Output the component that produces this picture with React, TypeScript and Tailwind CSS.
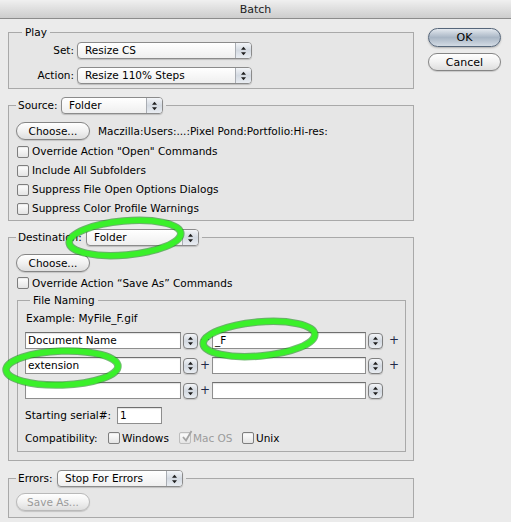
import type { ReactNode } from 'react';

function Arrows() {
  return (
    <svg width="7" height="10" viewBox="0 0 7 10">
      <path d="M3.5 0.8 L6 3.8 L1 3.8 Z" fill="#1e1e1e" />
      <path d="M1 6.2 L6 6.2 L3.5 9.2 Z" fill="#1e1e1e" />
    </svg>
  );
}

function Popup({ value, width }: { value: string; width: string }) {
  return (
    <div
      className={`flex h-[17px] items-center rounded-[4px] border border-[#8b8b8b] bg-linear-to-b from-white to-[#efefef] shadow-[0_1px_1px_rgba(0,0,0,0.18)] ${width}`}
    >
      <span className="flex-1 truncate pl-[7px] leading-[15px]">{value}</span>
      <span className="flex h-full w-[16px] items-center justify-center rounded-r-[3px] border-l border-[#a9adb3] bg-linear-to-b from-[#f3f5f8] via-[#d4dae2] to-[#e9edf2]">
        <Arrows />
      </span>
    </div>
  );
}

function Stepper() {
  return (
    <span className="ml-[2px] flex h-[16px] w-[15px] items-center justify-center rounded-[4px] border border-[#7f7f7f] bg-linear-to-b from-[#f3f5f8] via-[#d2d8e0] to-[#e9edf2] shadow-[0_1px_1px_rgba(0,0,0,0.15)]">
      <Arrows />
    </span>
  );
}

function PillButton({ children, width, disabled }: { children: ReactNode; width: string; disabled?: boolean }) {
  return (
    <div
      className={`flex h-[18px] items-center justify-center rounded-full border bg-linear-to-b from-white via-[#f1f1f1] to-[#dedede] shadow-[0_1px_1px_rgba(0,0,0,0.15)] ${width} ${
        disabled ? 'border-[#b9b9b9] text-[#9a9a9a]' : 'border-[#858585] text-black'
      }`}
    >
      {children}
    </div>
  );
}

function Checkbox({ checked, disabled }: { checked?: boolean; disabled?: boolean }) {
  return (
    <span
      className={`relative flex h-[12px] w-[12px] shrink-0 items-center justify-center rounded-[2px] border bg-linear-to-b from-white to-[#e4e4e4] shadow-[inset_0_1px_1px_rgba(0,0,0,0.08)] ${
        disabled ? 'border-[#bdbdbd]' : 'border-[#7e7e7e]'
      }`}
    >
      {checked && (
        <svg width="12" height="13" viewBox="0 0 12 13" className="absolute -top-[3px] left-[1px]">
          <path d="M2 7 L5 10.5 L10.5 1" stroke="#a4a4a4" strokeWidth="1.8" fill="none" />
        </svg>
      )}
    </span>
  );
}

function CheckRow({ label }: { label: string }) {
  return (
    <div className="flex h-[19px] items-center gap-[3px] pl-[1px]">
      <Checkbox />
      <span>{label}</span>
    </div>
  );
}

function Field({ value, width }: { value?: string; width: string }) {
  return (
    <div
      className={`h-[17px] border border-[#8e8e8e] border-t-[#6f6f6f] bg-white pl-[2px] leading-[15px] shadow-[inset_0_1px_1px_rgba(0,0,0,0.12)] ${width}`}
    >
      {value}
    </div>
  );
}

function NamingRow({ left, right, plus }: { left?: string; right?: string; plus: boolean }) {
  return (
    <div className="flex h-[17px] items-center">
      <Field value={left} width="w-[156px]" />
      <Stepper />
      <span className="w-[14px] text-center text-[12px] text-[#222a48]">+</span>
      <Field value={right} width="w-[154px]" />
      <Stepper />
      {plus && <span className="ml-[6px] text-[12px] text-[#222a48]">+</span>}
    </div>
  );
}

export default function App() {
  return (
    <div className="relative h-[522px] w-[511px] overflow-hidden bg-[#ebebeb] text-[10.5px] leading-[13px] text-black [font-family:'DejaVu_Sans',sans-serif]">
      <div className="flex h-[19px] items-center justify-center border-b border-[#8c8c8c] bg-linear-to-b from-[#f0f0f0] to-[#cdcdcd] text-[11px] text-[#222]">
        Batch
      </div>

      <div className="flex pl-[8px] pt-[6px]">
        <div className="flex w-[406px] flex-col">
          {/* Play */}
          <fieldset className="border border-[#a9a9a9] bg-black/[0.02] pb-[4px]">
            <legend className="ml-[13px] px-[3px] leading-[14px]">Play</legend>
            <div className="mt-[3px] flex h-[17px] items-center">
              <span className="w-[65px] text-right">Set:</span>
              <div className="ml-[3px]">
                <Popup value="Resize CS" width="w-[175px]" />
              </div>
            </div>
            <div className="mt-[8px] flex h-[17px] items-center">
              <span className="w-[65px] text-right">Action:</span>
              <div className="ml-[3px]">
                <Popup value="Resize 110% Steps" width="w-[175px]" />
              </div>
            </div>
          </fieldset>

          {/* Source */}
          <fieldset className="mt-[8px] border border-[#a9a9a9] bg-black/[0.02] pb-[2px] pl-[7px]">
            <legend className="flex items-center pl-[2px] pr-[3px]">
              <span className="w-[43px]">Source:</span>
              <Popup value="Folder" width="w-[102px]" />
            </legend>
            <div className="mt-[8px] flex items-center">
              <PillButton width="w-[74px]">Choose...</PillButton>
              <span className="ml-[8px]">Maczilla:Users:...:Pixel Pond:Portfolio:Hi-res:</span>
            </div>
            <div className="mt-[2px]">
              <CheckRow label={'Override Action "Open" Commands'} />
              <CheckRow label="Include All Subfolders" />
              <CheckRow label="Suppress File Open Options Dialogs" />
              <CheckRow label="Suppress Color Profile Warnings" />
            </div>
          </fieldset>

          {/* Destination */}
          <fieldset className="mt-[8px] border border-[#a9a9a9] bg-black/[0.02] pb-[8px] pl-[7px]">
            <legend className="flex items-center pl-[2px] pr-[3px]">
              <span className="w-[68px]">Destination:</span>
              <Popup value="Folder" width="w-[113px]" />
            </legend>
            <div className="mt-[8px]">
              <PillButton width="w-[74px]">Choose...</PillButton>
            </div>
            <div className="mt-[2px] flex h-[18px] items-center gap-[3px] pl-[1px]">
              <Checkbox />
              <span>Override Action “Save As” Commands</span>
            </div>

            <fieldset className="ml-[1px] mt-[1px] w-[389px] border border-[#a9a9a9] pb-[5px] pl-[7px]">
              <legend className="ml-[5px] px-[3px] leading-[14px]">File Naming</legend>
              <div className="mt-[4px] flex h-[14px] items-center pl-[1px]">Example: MyFile_F.gif</div>
              <div className="mt-[7px] flex flex-col gap-[8px]">
                <NamingRow left="Document Name" right="_F" plus />
                <NamingRow left="extension" plus />
                <NamingRow plus={false} />
              </div>
              <div className="mt-[8px] flex h-[17px] items-center">
                <span className="w-[92px]">Starting serial#:</span>
                <Field value="1" width="w-[45px]" />
              </div>
              <div className="mt-[6px] flex h-[16px] items-center">
                <span className="w-[83px]">Compatibility:</span>
                <div className="flex w-[71px] items-center gap-[2px]">
                  <Checkbox />
                  <span>Windows</span>
                </div>
                <div className="flex w-[63px] items-center gap-[2px]">
                  <Checkbox checked disabled />
                  <span className="text-[#9c9c9c]">Mac OS</span>
                </div>
                <div className="flex items-center gap-[2px]">
                  <Checkbox />
                  <span>Unix</span>
                </div>
              </div>
            </fieldset>
          </fieldset>

          {/* Errors */}
          <fieldset className="mt-[9px] border border-[#a9a9a9] bg-black/[0.02] pb-[6px] pl-[7px]">
            <legend className="flex items-center pl-[2px] pr-[3px]">
              <span className="w-[39px]">Errors:</span>
              <Popup value="Stop For Errors" width="w-[126px]" />
            </legend>
            <div className="mt-[6px]">
              <PillButton width="w-[74px]" disabled>
                Save As...
              </PillButton>
            </div>
          </fieldset>
        </div>

        <div className="ml-[14px] flex w-[73px] flex-col pt-[3px]">
          <div className="flex h-[19px] items-center justify-center rounded-full border border-[#56667a] bg-linear-to-b from-[#e4e9ef] via-[#a9b6c5] to-[#d3dbe4] text-[11px] shadow-[0_1px_2px_rgba(0,0,0,0.25)]">
            OK
          </div>
          <div className="mt-[6px] flex h-[18px] items-center justify-center rounded-full border border-[#858585] bg-linear-to-b from-white via-[#f1f1f1] to-[#dedede] text-[11px] shadow-[0_1px_1px_rgba(0,0,0,0.15)]">
            Cancel
          </div>
        </div>
      </div>

      {/* green annotation rings */}
      <svg className="pointer-events-none absolute inset-0" width="511" height="522" viewBox="0 0 511 522">
        <g fill="none">
          <ellipse cx="125" cy="238" rx="56" ry="17" transform="rotate(-5 125 238)" stroke="#178a17" strokeWidth="7.5" strokeOpacity="0.6" />
          <ellipse cx="125" cy="238" rx="56" ry="17" transform="rotate(-5 125 238)" stroke="#3af02a" strokeWidth="5.5" />
          <ellipse cx="259" cy="339" rx="56" ry="17" transform="rotate(-5 259 339)" stroke="#178a17" strokeWidth="7.5" strokeOpacity="0.6" />
          <ellipse cx="259" cy="339" rx="56" ry="17" transform="rotate(-5 259 339)" stroke="#3af02a" strokeWidth="5.5" />
          <ellipse cx="62" cy="368" rx="56" ry="17" transform="rotate(-2 62 368)" stroke="#178a17" strokeWidth="7.5" strokeOpacity="0.6" />
          <ellipse cx="62" cy="368" rx="56" ry="17" transform="rotate(-2 62 368)" stroke="#3af02a" strokeWidth="5.5" />
        </g>
      </svg>
    </div>
  );
}
